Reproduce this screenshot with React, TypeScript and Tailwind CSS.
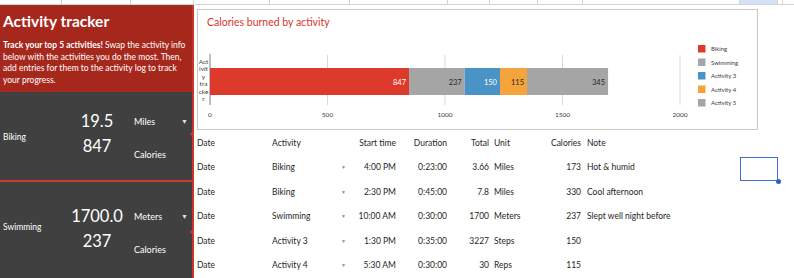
import React from "react";

const font = { fontFamily: "Lato, 'Noto Sans', sans-serif" };

const headerCells = [
  { w: "w-[62px]" },
  { w: "w-[69px]" },
  { w: "w-[63px]" },
  { w: "w-[76px]" },
  { w: "w-[80px]" },
  { w: "w-[98px]" },
  { w: "w-[42px]" },
  { w: "w-[48px]" },
  { w: "w-[45px]" },
  { w: "w-[157px]" },
  { w: "w-[38px]", active: true },
  { w: "w-[5px]" },
];

const series = [
  { name: "Biking", value: 847, color: "#de3a2c", label: "#ffffff" },
  { name: "Swimming", value: 237, color: "#a5a5a5", label: "#262626" },
  { name: "Activity 3", value: 150, color: "#4a93c6", label: "#ffffff" },
  { name: "Activity 4", value: 115, color: "#f5a33b", label: "#262626" },
  { name: "Activity 5", value: 345, color: "#a5a5a5", label: "#262626" },
];

const log = [
  { activity: "Biking", start: "4:00 PM", duration: "0:23:00", total: "3.66", unit: "Miles", cal: "173", note: "Hot & humid" },
  { activity: "Biking", start: "2:30 PM", duration: "0:45:00", total: "7.8", unit: "Miles", cal: "330", note: "Cool afternoon" },
  { activity: "Swimming", start: "10:00 AM", duration: "0:30:00", total: "1700", unit: "Meters", cal: "237", note: "Slept well night before" },
  { activity: "Activity 3", start: "1:30 PM", duration: "0:35:00", total: "3227", unit: "Steps", cal: "150", note: "" },
  { activity: "Activity 4", start: "5:30 AM", duration: "0:30:00", total: "30", unit: "Reps", cal: "115", note: "" },
];

function Stat({
  label,
  amount,
  unit,
  calories,
  height,
  pad,
  labelPad,
}: {
  label: string;
  amount: string;
  unit: string;
  calories: string;
  height: string;
  pad: string;
  labelPad: string;
}) {
  return (
    <div className={`flex items-center text-white ${height} ${pad}`}>
      <div className={`w-[62px] pl-[3px] text-[8.5px] ${labelPad}`}>{label}</div>
      <div className="w-[70px] flex flex-col items-center text-[16.5px] leading-[25px]">
        <span>{amount}</span>
        <span>{calories}</span>
      </div>
      <div className="flex-1 flex flex-col text-[9px] pl-[2px]">
        <div className="flex items-center justify-between pr-[4px] h-[24px]">
          <span>{unit}</span>
          <span className="text-[7px] text-[#dddddd]">▼</span>
        </div>
        <div className="h-[24px] pt-[14px]">Calories</div>
      </div>
    </div>
  );
}

function Chart() {
  const scale = (v: number) => (v * 470) / 2000;
  let x = 210;
  const bars = series.map((s) => {
    const w = scale(s.value);
    const bar = { ...s, x, w };
    x += w;
    return bar;
  });

  return (
    <div className="relative w-[561px] h-[121px] border border-[#c9c9c9] bg-white">
      <div className="pl-[9px] pt-[5px] text-[10.5px] text-[#d9342b]">Calories burned by activity</div>
      <svg className="absolute left-0 top-0" width="559" height="119" viewBox="198 10 559 119">
        {[327.5, 445, 562.5, 680].map((gx) => (
          <line key={gx} x1={gx} y1={55} x2={gx} y2={105} stroke="#d9d9d9" strokeWidth="1" />
        ))}
        <line x1={210} y1={54} x2={210} y2={105} stroke="#7f7f7f" strokeWidth="1" />
        {bars.map((b) => (
          <g key={b.name}>
            <rect x={b.x} y={68} width={b.w} height={27} fill={b.color} />
            <text x={b.x + b.w - 3} y={84.5} fontSize="7.5" textAnchor="end" fill={b.label} style={font}>
              {b.value}
            </text>
          </g>
        ))}
        {[0, 500, 1000, 1500, 2000].map((t) => (
          <text key={t} x={210 + scale(t)} y={117} fontSize="6.5" textAnchor="middle" fill="#404040" style={font}>
            {t}
          </text>
        ))}
        {["Act", "ivit", "y", "tra", "cke", "r"].map((part, i) => (
          <text key={i} x={203.5} y={64 + i * 7.4} fontSize="6.5" textAnchor="middle" fill="#404040" style={font}>
            {part}
          </text>
        ))}
        {series.map((s, i) => (
          <g key={s.name}>
            <rect x={698} y={45 + i * 13.5} width={7.5} height={7.5} fill={s.color} />
            <text x={711} y={51 + i * 13.5} fontSize="6" fill="#404040" style={font}>
              {s.name}
            </text>
          </g>
        ))}
      </svg>
    </div>
  );
}

function Row({ cells, header }: { cells: string[]; header?: boolean }) {
  const [date, activity, start, duration, total, unit, cal, note] = cells;
  return (
    <div className="flex items-center h-[24.5px] text-[8.5px] text-[#262626]">
      <div className="w-[75px]">{date}</div>
      <div className="w-[78px] flex items-center justify-between pr-[4px]">
        <span>{activity}</span>
        {!header && <span className="text-[5px] text-[#8a8a8a]">▼</span>}
      </div>
      <div className="w-[46px] text-right">{start}</div>
      <div className="w-[51px] text-right">{duration}</div>
      <div className="w-[42px] text-right">{total}</div>
      <div className="w-[52px] pl-[5px]">{unit}</div>
      <div className="w-[40px] text-right">{cal}</div>
      <div className="pl-[6px]">{note}</div>
    </div>
  );
}

export default function App() {
  return (
    <div className="relative w-[794px] h-[278px] overflow-hidden bg-white" style={font}>
      {/* column header strip */}
      <div className="flex h-[5px] border-b border-[#d4d4d4]">
        {headerCells.map((c, i) => (
          <div key={i} className={`${c.w} h-full border-r border-[#d4d4d4] ${c.active ? "bg-[#d5e1f6]" : ""}`} />
        ))}
      </div>

      <div className="flex">
        {/* left summary panel */}
        <div className="w-[194px] h-[273px] flex flex-col border-r-2 border-[#c8352a]">
          <div className="h-[87px] bg-[#a6281d] text-white px-[3px] pt-[6px]">
            <h1 className="text-[15.5px] font-bold leading-[20px]">Activity tracker</h1>
            <p className="mt-[9px] text-[8.5px] leading-[11.5px]">
              <b>Track your top 5 activities!</b> Swap the activity info
              <br />
              below with the activities you do the most. Then,
              <br />
              add entries for them to the activity log to track
              <br />
              your progress.
            </p>
          </div>
          <div className="flex-1 bg-[#404040] flex flex-col">
            <Stat
              label="Biking"
              amount="19.5"
              unit="Miles"
              calories="847"
              height="h-[88px]"
              pad="pb-[5px]"
              labelPad="pt-[7px]"
            />
            <div className="h-[2px] bg-[#d0392b]" />
            <Stat
              label="Swimming"
              amount="1700.0"
              unit="Meters"
              calories="237"
              height="h-[96px]"
              pad="pb-[3px]"
              labelPad="pb-[3px]"
            />
          </div>
        </div>

        {/* chart and activity log */}
        <div className="flex-1 pl-[3px] pt-[4px]">
          <Chart />
          <div className="pt-[1px]">
            <Row header cells={["Date", "Activity", "Start time", "Duration", "Total", "Unit", "Calories", "Note"]} />
            {log.map((r, i) => (
              <Row key={i} cells={["Date", r.activity, r.start, r.duration, r.total, r.unit, r.cal, r.note]} />
            ))}
          </div>
        </div>
      </div>

      {/* comment markers on the panel edge */}
      <div className="absolute left-[190px] top-[130px] w-0 h-0 border-t-[4px] border-t-transparent border-b-[4px] border-b-transparent border-r-[4px] border-r-[#d0392b]" />
      <div className="absolute left-[190px] top-[228px] w-0 h-0 border-t-[4px] border-t-transparent border-b-[4px] border-b-transparent border-r-[4px] border-r-[#d0392b]" />

      {/* selected cell */}
      <div className="absolute left-[740px] top-[157px] w-[38px] h-[24px] border-[1.5px] border-[#3b6fd6]" />
      <div className="absolute left-[776px] top-[179px] w-[5px] h-[5px] rounded-full bg-[#2f5fc4]" />
    </div>
  );
}
